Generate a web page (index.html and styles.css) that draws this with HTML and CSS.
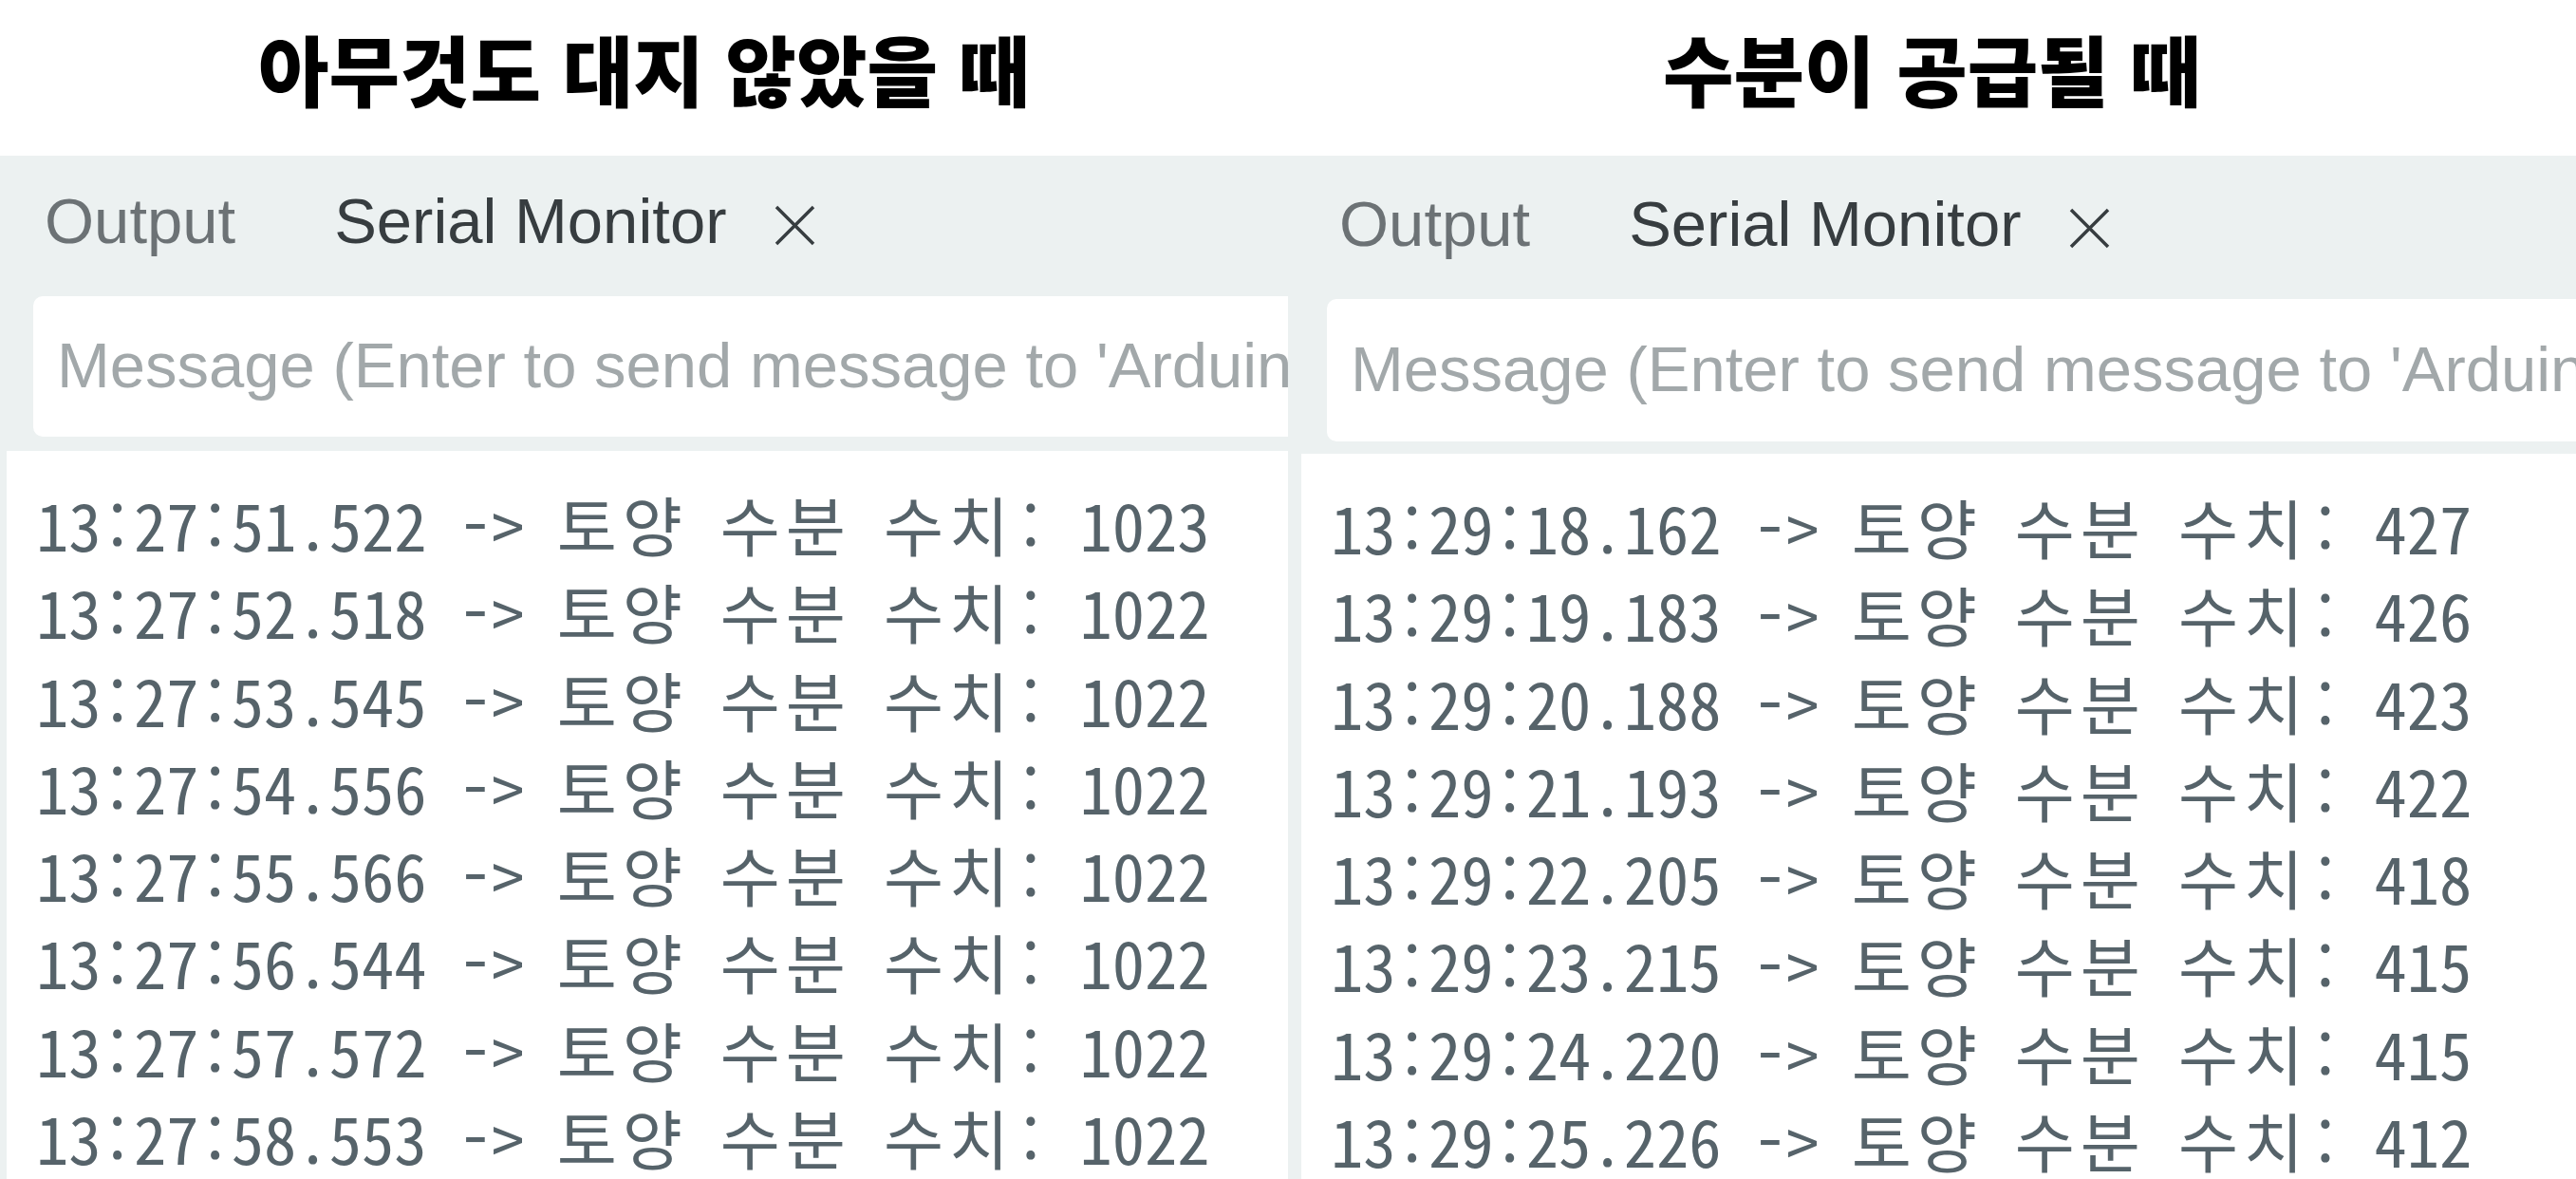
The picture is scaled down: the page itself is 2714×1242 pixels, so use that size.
FILE: index.html
```html
<!DOCTYPE html>
<html lang="ko">
<head>
	<meta charset="UTF-8">
	<title>토양 수분 센서 비교</title>
	<link rel="stylesheet" href="styles.css">
</head>
<body>
	<div class="compare">
		<section class="shot shot-dry">
			<h2 class="shot-title">아무것도 대지 않았을 때</h2>
			<div class="ide">
				<div class="tabs">
					<span class="tab">Output</span>
					<span class="tab tab-active">Serial Monitor
						<svg class="tab-close" width="45" height="45" viewBox="0 0 45 45"><path d="M3 3 L42 42 M42 3 L3 42"/></svg>
					</span>
				</div>
				<div class="send"><input type="text" placeholder="Message (Enter to send message to 'Arduino Uno' on 'COM3')"></div>
				<div class="log">
					<div class="line">13:27:51.522 -&gt; <span class="ko">토양</span> <span class="ko">수분</span> <span class="ko">수치</span>: 1023</div>
					<div class="line">13:27:52.518 -&gt; <span class="ko">토양</span> <span class="ko">수분</span> <span class="ko">수치</span>: 1022</div>
					<div class="line">13:27:53.545 -&gt; <span class="ko">토양</span> <span class="ko">수분</span> <span class="ko">수치</span>: 1022</div>
					<div class="line">13:27:54.556 -&gt; <span class="ko">토양</span> <span class="ko">수분</span> <span class="ko">수치</span>: 1022</div>
					<div class="line">13:27:55.566 -&gt; <span class="ko">토양</span> <span class="ko">수분</span> <span class="ko">수치</span>: 1022</div>
					<div class="line">13:27:56.544 -&gt; <span class="ko">토양</span> <span class="ko">수분</span> <span class="ko">수치</span>: 1022</div>
					<div class="line">13:27:57.572 -&gt; <span class="ko">토양</span> <span class="ko">수분</span> <span class="ko">수치</span>: 1022</div>
					<div class="line">13:27:58.553 -&gt; <span class="ko">토양</span> <span class="ko">수분</span> <span class="ko">수치</span>: 1022</div>
				</div>
			</div>
		</section>
		<section class="shot shot-wet">
			<h2 class="shot-title">수분이 공급될 때</h2>
			<div class="ide">
				<div class="tabs">
					<span class="tab">Output</span>
					<span class="tab tab-active">Serial Monitor
						<svg class="tab-close" width="45" height="45" viewBox="0 0 45 45"><path d="M3 3 L42 42 M42 3 L3 42"/></svg>
					</span>
				</div>
				<div class="send"><input type="text" placeholder="Message (Enter to send message to 'Arduino Uno' on 'COM3')"></div>
				<div class="log">
					<div class="line">13:29:18.162 -&gt; <span class="ko">토양</span> <span class="ko">수분</span> <span class="ko">수치</span>: 427</div>
					<div class="line">13:29:19.183 -&gt; <span class="ko">토양</span> <span class="ko">수분</span> <span class="ko">수치</span>: 426</div>
					<div class="line">13:29:20.188 -&gt; <span class="ko">토양</span> <span class="ko">수분</span> <span class="ko">수치</span>: 423</div>
					<div class="line">13:29:21.193 -&gt; <span class="ko">토양</span> <span class="ko">수분</span> <span class="ko">수치</span>: 422</div>
					<div class="line">13:29:22.205 -&gt; <span class="ko">토양</span> <span class="ko">수분</span> <span class="ko">수치</span>: 418</div>
					<div class="line">13:29:23.215 -&gt; <span class="ko">토양</span> <span class="ko">수분</span> <span class="ko">수치</span>: 415</div>
					<div class="line">13:29:24.220 -&gt; <span class="ko">토양</span> <span class="ko">수분</span> <span class="ko">수치</span>: 415</div>
					<div class="line">13:29:25.226 -&gt; <span class="ko">토양</span> <span class="ko">수분</span> <span class="ko">수치</span>: 412</div>
				</div>
			</div>
		</section>
	</div>
</body>
</html>
```

FILE: styles.css
```css
body {
	margin: 0;
	background-color: #fff;
}
.compare {
	display: grid;
	grid-template-columns: 1357px 1357px;
	height: 1242px;
	overflow: hidden;
}
.shot {
	display: flex;
	flex-direction: column;
	min-width: 0;
	min-height: 0;
	overflow: hidden;
}
.shot-title {
	flex: none;
	box-sizing: border-box;
	height: 164px;
	margin: 0;
	padding-bottom: 24px;
	display: flex;
	align-items: center;
	justify-content: center;
	font: 900 81px/1 "Noto Sans CJK KR", sans-serif;
	color: #000;
}
.ide {
	flex: 1;
	min-height: 0;
	display: flex;
	flex-direction: column;
	background-color: #ecf1f1;
	font-family: "Liberation Sans", Arial, sans-serif;
}
.tabs {
	flex: none;
	display: flex;
	align-items: center;
	height: 67px;
	padding: 35px 0 46px 47px;
	font-size: 67px;
	line-height: 67px;
	white-space: nowrap;
}
.tab {
	color: #6c7275;
}
.tab-active {
	display: flex;
	align-items: center;
	gap: 50px;
	margin-left: 104px;
	color: #373d40;
}
.tab-close {
	margin-top: 9px;
	fill: none;
	stroke: #373d40;
	stroke-width: 3.5;
}
.send {
	flex: none;
	display: flex;
	align-items: center;
	height: 148px;
	margin: 0 -20px 0 35px;
	padding-left: 25px;
	background-color: #fff;
	border-radius: 10px;
}
.send input {
	flex: 1;
	min-width: 0;
	border: 0;
	outline: 0;
	padding: 0;
	margin-top: -3px;
	background: transparent;
	font: 67px "Liberation Sans", Arial, sans-serif;
	color: #373d40;
}
.send input::placeholder {
	color: #a2a8aa;
}
.log {
	flex: 1;
	min-height: 0;
	margin: 15px 0 0 7px;
	padding: 30px 0 0 31px;
	background-color: #fff;
	font: 68.6px/92.3px "Noto Sans Mono CJK KR", "Noto Sans CJK KR", monospace;
	color: #56636a;
}
.line {
	white-space: pre;
}
/* hangul takes two columns in the serial font */
.ko {
	letter-spacing: 5.8px;
}

/* right shot was cropped a few pixels further left */
.shot-wet .tabs {
	padding-top: 38px;
	padding-left: 54px;
}
.shot-wet .send {
	height: 150px;
	margin-left: 41px;
}
.shot-wet .log {
	margin: 13px 0 0 14px;
}
```
